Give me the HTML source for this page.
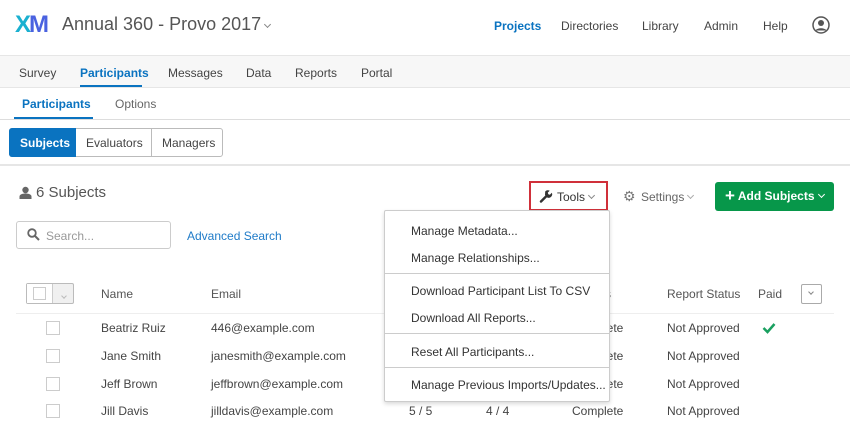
<!DOCTYPE html>
<html><head><meta charset="utf-8"><style>
*{margin:0;padding:0;box-sizing:border-box}
body{width:850px;height:425px;overflow:hidden;background:#fff;font-family:"Liberation Sans",sans-serif;color:#444;font-size:12px;position:relative}
.a{position:absolute;white-space:nowrap}
.cb{position:absolute;width:14px;height:14px;border:1px solid #ccc;background:#fff}
.mi{position:absolute;left:26px;font-size:12px;color:#333}
.sep{position:absolute;left:0;right:0;height:1px;background:#ccc}
.ch{display:inline-block;width:5px;height:5px;border-right:1px solid #888;border-bottom:1px solid #888;transform:rotate(45deg);position:relative;top:-3px;margin-left:4px}
</style></head><body>
<div class="a" style="left:15px;top:11px;font-size:24px;font-weight:bold;letter-spacing:-2px;color:#1ab0d0">X<span style="color:#4a62e0">M</span></div>
<div class="a" style="left:62px;top:14px;font-size:18px;color:#555">Annual 360 - Provo 2017<span class="ch" style="width:5px;height:5px"></span></div>
<div class="a" style="left:494px;top:19px;color:#0a73c0;font-weight:bold">Projects</div>
<div class="a" style="left:561px;top:19px;color:#444">Directories</div>
<div class="a" style="left:642px;top:19px;color:#444">Library</div>
<div class="a" style="left:704px;top:19px;color:#444">Admin</div>
<div class="a" style="left:763px;top:19px;color:#444">Help</div>
<svg class="a" style="left:812px;top:16px" width="18" height="18" viewBox="0 0 18 18"><circle cx="9" cy="9" r="8" fill="none" stroke="#555" stroke-width="1.5"/><circle cx="9" cy="7" r="3" fill="#555"/><path d="M3.5 14.5c1.5-3 9.5-3 11 0" fill="#555"/></svg>
<div class="a" style="left:0;top:55px;width:850px;height:33px;background:#f7f7f7;border-top:1px solid #e6e6e6;border-bottom:1px solid #e6e6e6"></div>
<div class="a" style="left:19px;top:66px;color:#444">Survey</div>
<div class="a" style="left:80px;top:66px;color:#0a73c0;font-weight:bold">Participants</div>
<div class="a" style="left:80px;top:85px;width:62px;height:2px;background:#0a73c0"></div>
<div class="a" style="left:168px;top:66px">Messages</div>
<div class="a" style="left:246px;top:66px">Data</div>
<div class="a" style="left:295px;top:66px">Reports</div>
<div class="a" style="left:361px;top:66px">Portal</div>
<div class="a" style="left:22px;top:97px;color:#0a73c0;font-weight:bold">Participants</div>
<div class="a" style="left:14px;top:117px;width:79px;height:2px;background:#0a73c0"></div>
<div class="a" style="left:115px;top:97px;color:#666">Options</div>
<div class="a" style="left:0;top:119px;width:850px;height:1px;background:#ddd"></div>
<div class="a" style="left:9px;top:128px;width:214px;height:29px;border:1px solid #bbb;border-radius:3px"></div>
<div class="a" style="left:9px;top:128px;width:67px;height:29px;background:#0a73c0;border-radius:3px 0 0 3px;color:#fff;font-weight:bold;padding:8px 0 0 11px">Subjects</div>
<div class="a" style="left:151px;top:128px;width:1px;height:29px;background:#bbb"></div>
<div class="a" style="left:86px;top:136px">Evaluators</div>
<div class="a" style="left:162px;top:136px">Managers</div>
<div class="a" style="left:0;top:164px;width:850px;height:2px;background:#e6e6e6"></div>
<svg class="a" style="left:19px;top:186px" width="13" height="13" viewBox="0 0 13 13"><circle cx="6.5" cy="4" r="3.2" fill="#666"/><path d="M0.5 13v-2.5c0-2 3-3 6-3s6 1 6 3V13z" fill="#666"/></svg>
<div class="a" style="left:36px;top:184px;font-size:15px;color:#555">6 Subjects</div>
<div class="a" style="left:529px;top:181px;width:79px;height:30px;border:2px solid #d0303a"></div>
<svg class="a" style="left:539px;top:189px" width="14" height="14" viewBox="0 0 14 14"><path d="M2 12.5l5-5" stroke="#333" stroke-width="2.4" stroke-linecap="round"/><path d="M6.2 2.5a3.5 3.5 0 0 1 4.5-.8L8.8 3.6l.5 1.6 1.6.5 1.9-1.9a3.5 3.5 0 0 1-4.8 4.6L6 6z" fill="#333"/></svg>
<div class="a" style="left:557px;top:190px;color:#333">Tools<span class="ch"></span></div>
<div class="a" style="left:623px;top:188px;color:#777;font-size:14px">⚙</div>
<div class="a" style="left:641px;top:190px;color:#666">Settings<span class="ch" style="border-color:#aaa"></span></div>
<div class="a" style="left:715px;top:182px;width:119px;height:29px;background:#07974a;border-radius:3px;color:#fff;font-weight:bold;padding:7px 0 0 10px"><span style="font-size:17px;line-height:12px;position:relative;top:1px">+</span> Add Subjects<span class="ch" style="border-color:#fff"></span></div>
<div class="a" style="left:16px;top:221px;width:155px;height:28px;border:1px solid #ccc;border-radius:3px"></div>
<svg class="a" style="left:27px;top:228px" width="13" height="13" viewBox="0 0 13 13"><circle cx="5" cy="5" r="3.8" stroke="#666" stroke-width="1.8" fill="none"/><path d="M8 8l4 4" stroke="#666" stroke-width="2"/></svg>
<div class="a" style="left:46px;top:229px;color:#999">Search...</div>
<div class="a" style="left:187px;top:229px;color:#1f7bc8">Advanced Search</div>
<div class="a" style="left:26px;top:283px;width:48px;height:21px;border:1px solid #bbb;border-radius:2px;background:#f0f0f0"></div>
<div class="a" style="left:27px;top:284px;width:26px;height:19px;background:#fff;border-right:1px solid #ccc"></div>
<div class="cb" style="left:33px;top:287px;width:13px;height:13px"></div>
<div class="a" style="left:58px;top:290px"><span class="ch" style="border-color:#bbb;width:4px;height:4px"></span></div>
<div class="a" style="left:101px;top:287px;color:#555">Name</div>
<div class="a" style="left:211px;top:287px;color:#555">Email</div>
<div class="a" style="left:605px;top:287px;color:#555">s</div>
<div class="a" style="left:667px;top:287px;color:#555">Report Status</div>
<div class="a" style="left:758px;top:287px;color:#555">Paid</div>
<div class="a" style="left:801px;top:284px;width:21px;height:20px;border:1px solid #aaa;border-radius:2px"><span class="ch" style="position:absolute;left:3px;top:5px;width:4px;height:4px"></span></div>
<div class="a" style="left:16px;top:313px;width:818px;height:1px;background:#eee"></div>
<div class="cb" style="left:46px;top:321px"></div><div class="a" style="left:101px;top:321px">Beatriz Ruiz</div><div class="a" style="left:211px;top:321px">446@example.com</div><div class="a" style="left:572px;top:321px">Complete</div><div class="a" style="left:667px;top:321px">Not Approved</div>
<svg class="a" style="left:762px;top:322px" width="14" height="12" viewBox="0 0 14 12"><path d="M1.5 6l4 4 7-8" stroke="#1aa060" stroke-width="2.5" fill="none"/></svg>
<div class="cb" style="left:46px;top:349px"></div><div class="a" style="left:101px;top:349px">Jane Smith</div><div class="a" style="left:211px;top:349px">janesmith@example.com</div><div class="a" style="left:572px;top:349px">Complete</div><div class="a" style="left:667px;top:349px">Not Approved</div>
<div class="cb" style="left:46px;top:377px"></div><div class="a" style="left:101px;top:377px">Jeff Brown</div><div class="a" style="left:211px;top:377px">jeffbrown@example.com</div><div class="a" style="left:572px;top:377px">Complete</div><div class="a" style="left:667px;top:377px">Not Approved</div>
<div class="cb" style="left:46px;top:404px"></div><div class="a" style="left:101px;top:404px">Jill Davis</div><div class="a" style="left:211px;top:404px">jilldavis@example.com</div><div class="a" style="left:409px;top:404px">5 / 5</div><div class="a" style="left:486px;top:404px">4 / 4</div><div class="a" style="left:572px;top:404px">Complete</div><div class="a" style="left:667px;top:404px">Not Approved</div>
<div class="a" style="left:384px;top:210px;width:226px;height:192px;background:#fff;border:1px solid #ccc;border-radius:2px;box-shadow:0 2px 4px rgba(0,0,0,.15)">
<div class="mi" style="top:13px">Manage Metadata...</div>
<div class="mi" style="top:40px">Manage Relationships...</div>
<div class="sep" style="top:62px"></div>
<div class="mi" style="top:73px">Download Participant List To CSV</div>
<div class="mi" style="top:100px">Download All Reports...</div>
<div class="sep" style="top:122px"></div>
<div class="mi" style="top:134px">Reset All Participants...</div>
<div class="sep" style="top:156px"></div>
<div class="mi" style="top:167px">Manage Previous Imports/Updates...</div>
</div>
</body></html>
